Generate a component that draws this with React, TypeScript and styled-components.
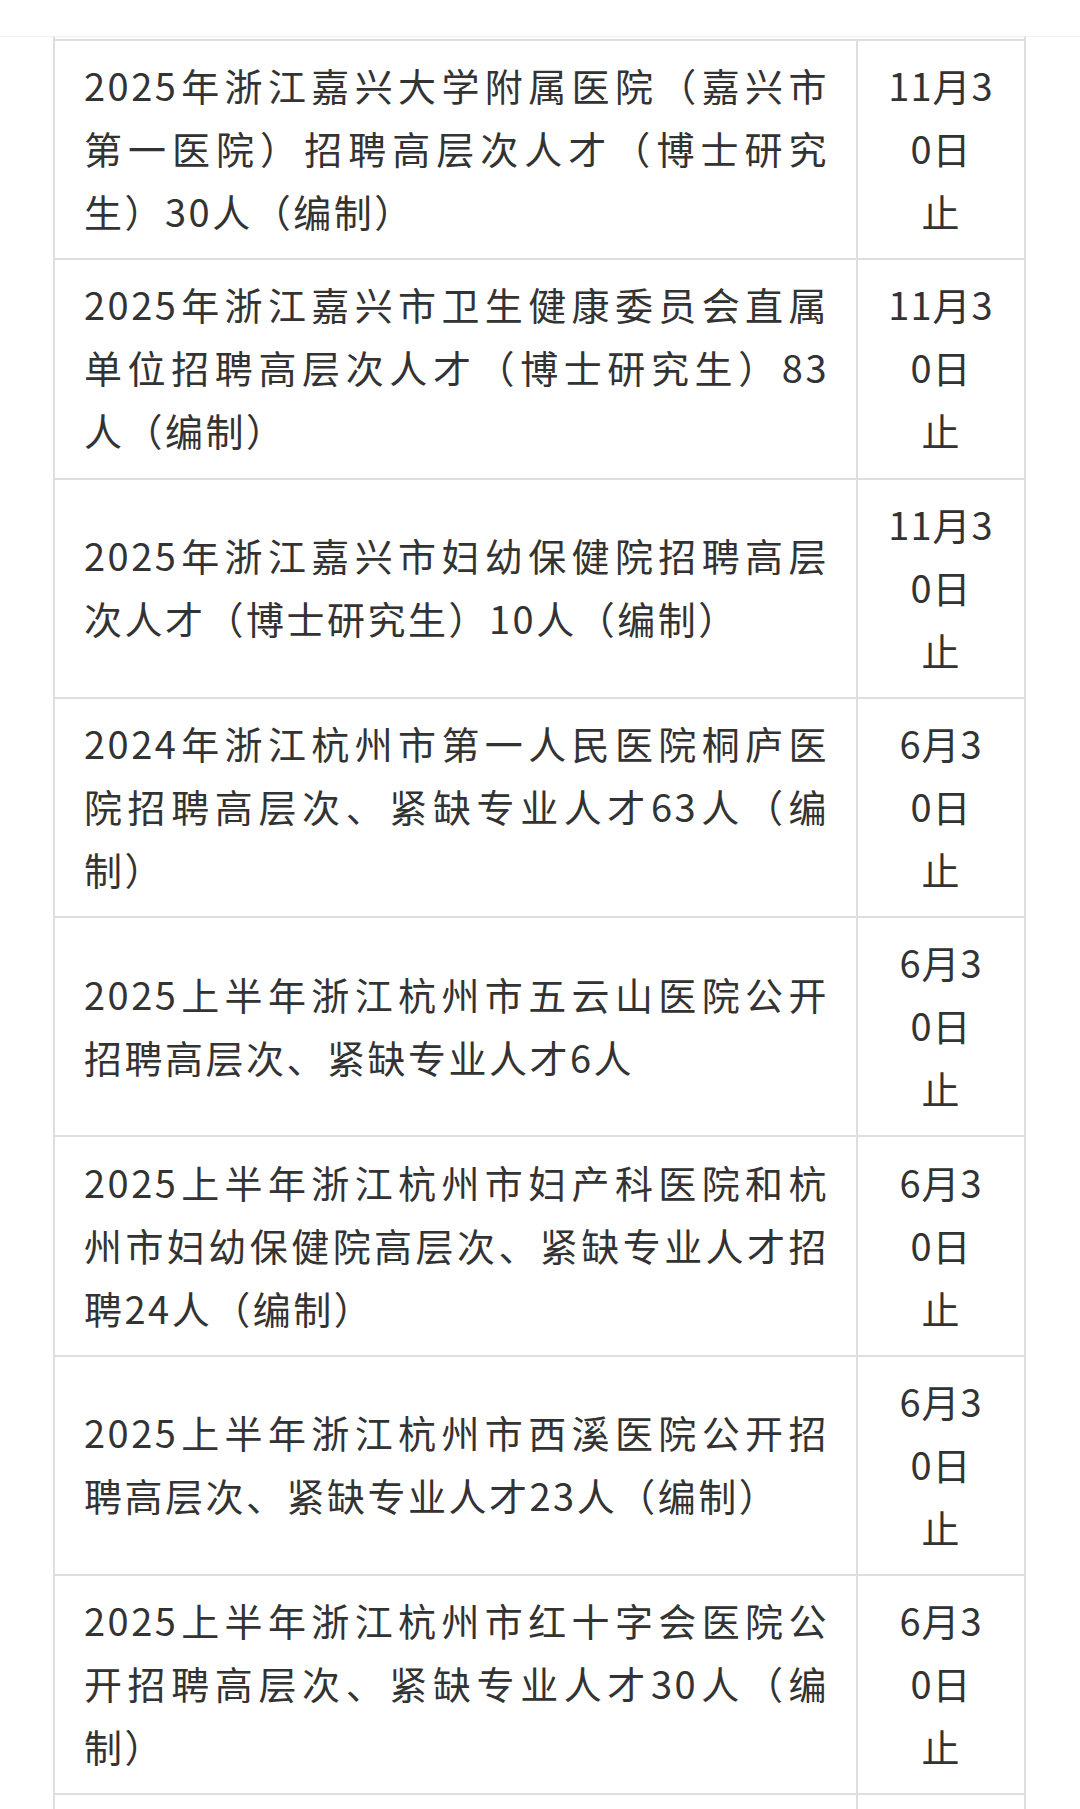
import React from "react";
import styled, { createGlobalStyle } from "styled-components";

const GlobalStyle = createGlobalStyle`
  html, body {
    margin: 0;
    padding: 0;
    background: #fff;
  }
  body {
    font-family: "Noto Sans CJK SC", "Noto Sans", sans-serif;
    color: #333;
  }
`;

const TopBar = styled.div`
  height: 36px;
  border-bottom: 1px solid #efefef;
`;

const Table = styled.div`
  margin-left: 53px;
  width: 969px;
  border-left: 2px solid #dedede;
  border-right: 2px solid #dedede;
  padding-top: 2px;
`;

const Row = styled.div<{ $first?: boolean }>`
  display: grid;
  grid-template-columns: 803px 164px;
  border-top: ${(p) => (p.$first ? "2px solid #dedede" : "none")};
  border-bottom: 2px solid #dedede;
`;

const TextCell = styled.div`
  box-sizing: border-box;
  min-height: 217.3px;
  padding: 12px 27px 16px 29px;
  border-right: 2px solid #dedede;
  display: flex;
  flex-direction: column;
  justify-content: center;
`;

const DateCell = styled.div`
  box-sizing: border-box;
  padding: 12px 0 16px 2px;
  display: flex;
  flex-direction: column;
  justify-content: center;
  align-items: center;
`;

const Line = styled.div<{ $full?: boolean }>`
  font-size: 38px;
  line-height: 63px;
  letter-spacing: 2.5px;
  white-space: nowrap;
  text-align: ${(p) => (p.$full ? "justify" : "left")};
  text-align-last: ${(p) => (p.$full ? "justify" : "left")};
`;

const DateLine = styled.div`
  font-size: 38px;
  line-height: 63px;
  letter-spacing: 1px;
  white-space: nowrap;
  text-align: center;
`;

const TailRow = styled.div`
  display: grid;
  grid-template-columns: 803px 164px;
  height: 40px;
`;

const TailCell = styled.div`
  border-right: 2px solid #dedede;
`;

type Job = { lines: string[]; date: string[] };

const NOV = ["11月3", "0日", "止"];
const JUN = ["6月3", "0日", "止"];

const jobs: Job[] = [
  {
    lines: [
      "2025年浙江嘉兴大学附属医院（嘉兴市",
      "第一医院）招聘高层次人才（博士研究",
      "生）30人（编制）",
    ],
    date: NOV,
  },
  {
    lines: [
      "2025年浙江嘉兴市卫生健康委员会直属",
      "单位招聘高层次人才（博士研究生）83",
      "人（编制）",
    ],
    date: NOV,
  },
  {
    lines: ["2025年浙江嘉兴市妇幼保健院招聘高层", "次人才（博士研究生）10人（编制）"],
    date: NOV,
  },
  {
    lines: [
      "2024年浙江杭州市第一人民医院桐庐医",
      "院招聘高层次、紧缺专业人才63人（编",
      "制）",
    ],
    date: JUN,
  },
  {
    lines: ["2025上半年浙江杭州市五云山医院公开", "招聘高层次、紧缺专业人才6人"],
    date: JUN,
  },
  {
    lines: [
      "2025上半年浙江杭州市妇产科医院和杭",
      "州市妇幼保健院高层次、紧缺专业人才招",
      "聘24人（编制）",
    ],
    date: JUN,
  },
  {
    lines: ["2025上半年浙江杭州市西溪医院公开招", "聘高层次、紧缺专业人才23人（编制）"],
    date: JUN,
  },
  {
    lines: [
      "2025上半年浙江杭州市红十字会医院公",
      "开招聘高层次、紧缺专业人才30人（编",
      "制）",
    ],
    date: JUN,
  },
];

const App = () => {
  return (
    <>
      <GlobalStyle />
      <TopBar />
      <Table>
        {jobs.map((job, i) => (
          <Row key={i} $first={i === 0}>
            <TextCell>
              {job.lines.map((line, j) => (
                <Line key={j} $full={j < job.lines.length - 1}>
                  {line}
                </Line>
              ))}
            </TextCell>
            <DateCell>
              {job.date.map((d, j) => (
                <DateLine key={j}>{d}</DateLine>
              ))}
            </DateCell>
          </Row>
        ))}
        <TailRow>
          <TailCell />
          <div />
        </TailRow>
      </Table>
    </>
  );
};

export default App;
